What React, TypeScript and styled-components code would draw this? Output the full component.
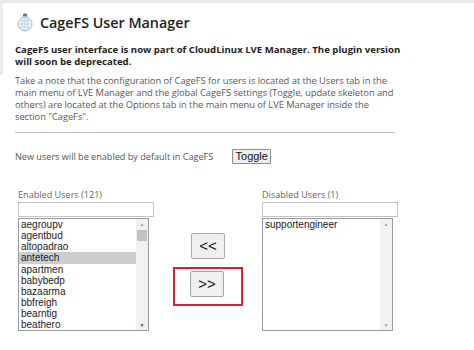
import React from 'react';
import styled, { createGlobalStyle } from 'styled-components';

const GlobalStyle = createGlobalStyle`
  html, body {
    margin: 0;
    padding: 0;
    background: #fff;
  }
  body {
    font-family: "Open Sans", "Liberation Sans", sans-serif;
  }
`;

const enabledUsers = [
  'aegroupv',
  'agentbud',
  'altopadrao',
  'antetech',
  'apartmen',
  'babybedp',
  'bazaarma',
  'bbfreigh',
  'bearntig',
  'beathero',
];

const disabledUsers = ['supportengineer'];

function Globe() {
  return (
    <svg width="16" height="19" viewBox="0 0 16 19">
      <rect x="6" y="0.5" width="4" height="3" rx="1.2" fill="#5d7896" />
      <path d="M5 3.5 h6 l-1 1.5 h-4 z" fill="#8fa6c0" />
      <circle cx="8" cy="11" r="7" fill="#f4f8fc" stroke="#a9bfd8" strokeWidth="1" />
      <ellipse cx="8" cy="11" rx="3" ry="7" fill="none" stroke="#b7cbe0" strokeWidth="0.8" />
      <line x1="8" y1="4" x2="8" y2="18" stroke="#b7cbe0" strokeWidth="0.8" />
      <line x1="1" y1="11" x2="15" y2="11" stroke="#b7cbe0" strokeWidth="0.8" />
      <path d="M2 7.5 Q8 9 14 7.5 M2 14.5 Q8 13 14 14.5" fill="none" stroke="#b7cbe0" strokeWidth="0.8" />
    </svg>
  );
}

export default function App() {
  return (
    <>
      <GlobalStyle />
      <Frame>
        <HeaderBlock>
          <TitleRow>
            <Globe />
            <Title>CageFS User Manager</Title>
          </TitleRow>
          <Notice>
            CageFS user interface is now part of CloudLinux LVE Manager. The plugin version
            <br />
            will soon be deprecated.
          </Notice>
        </HeaderBlock>
        <Body>
          <Note>
            Take a note that the configuration of CageFS for users is located at the Users tab in the
            <br />
            main menu of LVE Manager and the global CageFS settings (Toggle, update skeleton and
            <br />
            others) are located at the Options tab in the main menu of LVE Manager inside the
            <br />
            section "CageFs".
          </Note>
          <Rule />
          <ToggleRow>
            <span>New users will be enabled by default in CageFS</span>
            <SmallButton>Toggle</SmallButton>
          </ToggleRow>
          <Columns>
            <UserColumn>
              <ColumnLabel>Enabled Users (121)</ColumnLabel>
              <Search />
              <ListBox>
                <Items>
                  {enabledUsers.map((u) => (
                    <Item key={u} selected={u === 'antetech'}>{u}</Item>
                  ))}
                </Items>
                <Scrollbar>
                  <Arrow dark={false}>▲</Arrow>
                  <Track>
                    <Thumb />
                  </Track>
                  <Arrow dark>▼</Arrow>
                </Scrollbar>
              </ListBox>
            </UserColumn>
            <MoveColumn>
              <MoveButton>&lt;&lt;</MoveButton>
              <Highlight>
                <MoveButton>&gt;&gt;</MoveButton>
              </Highlight>
            </MoveColumn>
            <UserColumn>
              <ColumnLabel>Disabled Users (1)</ColumnLabel>
              <Search />
              <ListBox>
                <Items>
                  {disabledUsers.map((u) => (
                    <Item key={u} selected={false}>{u}</Item>
                  ))}
                </Items>
                <Scrollbar>
                  <Arrow dark={false}>▲</Arrow>
                  <Track />
                  <Arrow dark={false}>▼</Arrow>
                </Scrollbar>
              </ListBox>
            </UserColumn>
          </Columns>
        </Body>
      </Frame>
    </>
  );
}

const Frame = styled.div`
  border-top: 3px solid #e8e8e8;
  width: 474px;
  height: 347px;
  overflow: hidden;
`;

const HeaderBlock = styled.div`
  border-left: 3px solid #ececec;
  padding: 9px 0 6px 12px;
`;

const TitleRow = styled.div`
  display: flex;
  align-items: center;
  gap: 7px;
  padding-left: 2px;
  height: 20px;
`;

const Title = styled.h1`
  margin: 0;
  font-size: 14.3px;
  font-weight: 600;
  color: #222;
`;

const Notice = styled.p`
  margin: 12px 0 0;
  white-space: nowrap;
  font-size: 9.6px;
  line-height: 12.3px;
  font-weight: 700;
  color: #1e1e1e;
`;

const Body = styled.div`
  padding: 0 0 0 15px;
`;

const Note = styled.p`
  margin: 0;
  white-space: nowrap;
  font-size: 9.35px;
  letter-spacing: -0.05px;
  line-height: 12.3px;
  color: #5a5a5a;
`;

const Rule = styled.hr`
  margin: 8px 0 0;
  width: 380px;
  border: none;
  border-top: 1px solid #bcbcbc;
`;

const ToggleRow = styled.div`
  display: flex;
  align-items: center;
  gap: 19px;
  margin-top: 16px;
  font-size: 9.1px;
  color: #555;
`;

const SmallButton = styled.button`
  font-family: "Liberation Sans", Arial, sans-serif;
  font-size: 11px;
  color: #111;
  height: 15px;
  width: 39px;
  padding: 0;
  background: #efefef;
  border: 1px solid #8e8e8e;
  border-radius: 1px;
`;

const Columns = styled.div`
  display: flex;
  margin-top: 25px;
  padding-left: 3px;
`;

const UserColumn = styled.div`
  display: flex;
  flex-direction: column;
  width: 136px;
`;

const ColumnLabel = styled.div`
  font-size: 9.1px;
  line-height: 12px;
  height: 13px;
  color: #666;
`;

const Search = styled.div`
  height: 13px;
  width: 134px;
  border: 1px solid #c4c4c4;
  background: #fff;
`;

const ListBox = styled.div`
  display: flex;
  width: 129px;
  height: 111px;
  margin-top: 1px;
  border: 1px solid #9b9b9b;
  background: #fff;
`;

const Items = styled.div`
  flex: 1;
`;

const Item = styled.div<{ selected: boolean }>`
  font-family: "Liberation Sans", Arial, sans-serif;
  font-size: 10px;
  line-height: 11.2px;
  height: 11.2px;
  padding-left: 2px;
  color: #222;
  background: ${(p) => (p.selected ? '#cdcdcd' : 'transparent')};
`;

const Scrollbar = styled.div`
  width: 12px;
  display: flex;
  flex-direction: column;
  background: #f1f1f1;
`;

const Arrow = styled.div<{ dark: boolean }>`
  height: 10px;
  font-size: 5px;
  line-height: 10px;
  text-align: center;
  color: ${(p) => (p.dark ? '#505050' : '#a3a3a3')};
`;

const Track = styled.div`
  flex: 1;
`;

const Thumb = styled.div`
  width: 10px;
  margin: 1px auto 0;
  height: 11px;
  background: #c1c1c1;
`;

const MoveColumn = styled.div`
  width: 70px;
  margin: 0 19px;
  padding-top: 44px;
  display: flex;
  flex-direction: column;
  align-items: center;
`;

const MoveButton = styled.button`
  font-family: "Liberation Sans", Arial, sans-serif;
  font-size: 15px;
  color: #111;
  width: 34px;
  height: 26px;
  padding: 0;
  background: #efefef;
  border: 1px solid #a8a8a8;
  border-radius: 2px;
`;

const Highlight = styled.div`
  box-sizing: border-box;
  margin-top: 8px;
  width: 70px;
  height: 39px;
  border: 2px solid #d8232a;
  display: flex;
  justify-content: center;
  padding: 2px 2px 0 0;
`;
